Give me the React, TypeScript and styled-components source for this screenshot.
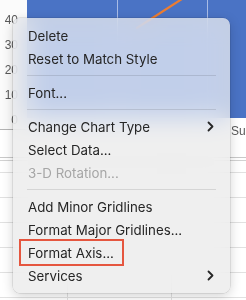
import React from 'react'
import styled, { createGlobalStyle } from 'styled-components'

const GlobalStyle = createGlobalStyle`
  html, body { margin: 0; padding: 0; background: #ffffff; }
  * { box-sizing: border-box; }
`

const Page = styled.div`
  position: relative;
  width: 246px;
  height: 300px;
  overflow: hidden;
  background: #ffffff;
  font-family: Inter, "Liberation Sans", sans-serif;
`

const Chart = styled.div`
  display: flex;
  height: 158px;
  border-bottom: 1px solid #c9c9c9;
`

const AxisColumn = styled.div`
  width: 27px;
  height: 130px;
  flex-shrink: 0;
  padding-top: 8px;
  padding-right: 9px;
  border-bottom: 1px solid #b4b4b4;
  background: #fbfbfb;
  display: flex;
  flex-direction: column;
  align-items: flex-end;
`

const AxisLabel = styled.div`
  height: 25px;
  line-height: 25px;
  font-size: 12px;
  color: #595959;
  font-family: "Liberation Sans", Arial, sans-serif;
`

const PlotColumn = styled.div`
  flex: 1;
  display: flex;
  flex-direction: column;
`

const Plot = styled.div`
  height: 118px;
  background: #4a73c5;
  svg { display: block; }
`

const CategoryRow = styled.div`
  height: 26px;
  padding-left: 204px;
  line-height: 26px;
  font-size: 12px;
  color: #595959;
  white-space: nowrap;
  font-family: "Liberation Sans", Arial, sans-serif;
`

const Sheet = styled.div`
  border-top: 1px solid #d2d2d2;
  margin-top: 2px;
`

const SheetRow = styled.div<{ $h: number }>`
  display: grid;
  grid-template-columns: 68px 104px 1fr;
  height: ${p => p.$h}px;
  border-bottom: 1px solid #e1e1e1;
`

const SheetCell = styled.div`
  border-right: 1px solid #e1e1e1;
  &:last-child { border-right: none; }
`

const Menu = styled.div`
  position: absolute;
  left: 13px;
  top: 18px;
  width: 217px;
  padding: 6px 0;
  border-radius: 7px;
  background: rgba(234, 234, 234, 0.77);
  backdrop-filter: blur(12px) saturate(1.4);
  box-shadow: 0 0 0 0.5px rgba(0, 0, 0, 0.16), 0 3px 12px rgba(0, 0, 0, 0.18);
`

const Item = styled.div<{ $disabled?: boolean }>`
  position: relative;
  display: flex;
  align-items: center;
  justify-content: space-between;
  height: 23px;
  padding: 0 16px 0 15px;
  font-size: 13.3px;
  color: ${p => (p.$disabled ? '#a6a6a6' : '#262626')};
  white-space: nowrap;
`

const Separator = styled.div`
  height: 11px;
  display: flex;
  align-items: center;
  padding: 0 14px;
  &::after {
    content: '';
    flex: 1;
    height: 1px;
    background: rgba(0, 0, 0, 0.11);
  }
`

const Highlight = styled.div`
  position: absolute;
  left: 6px;
  top: -2px;
  width: 105px;
  height: 27px;
  border: 2px solid #e5563f;
`

const Chevron = () => (
  <svg width="7" height="11" viewBox="0 0 7 11">
    <path d="M1.5 1.5 L5.5 5.5 L1.5 9.5" fill="none" stroke="#262626" strokeWidth="1.8" strokeLinecap="round" strokeLinejoin="round" />
  </svg>
)

const rows = [12, 25, 25, 25, 25, 25, 25]

export default function App() {
  return (
    <Page>
      <GlobalStyle />
      <Chart>
        <AxisColumn>
          {['40', '30', '20', '10', '0'].map(v => (
            <AxisLabel key={v}>{v}</AxisLabel>
          ))}
        </AxisColumn>
        <PlotColumn>
          <Plot>
            <svg width="219" height="118">
              <line x1="90.5" y1="0" x2="90.5" y2="118" stroke="#a9bce6" strokeWidth="1" />
              <line x1="180.5" y1="0" x2="180.5" y2="118" stroke="#a9bce6" strokeWidth="1" />
              <line x1="110" y1="28" x2="158" y2="-3" stroke="#ed7d31" strokeWidth="2.2" strokeLinecap="round" />
            </svg>
          </Plot>
          <CategoryRow>Su</CategoryRow>
        </PlotColumn>
      </Chart>
      <Sheet>
        {rows.map((h, i) => (
          <SheetRow key={i} $h={h}>
            <SheetCell />
            <SheetCell />
            <SheetCell />
          </SheetRow>
        ))}
      </Sheet>

      <Menu>
        <Item>Delete</Item>
        <Item>Reset to Match Style</Item>
        <Separator />
        <Item>Font...</Item>
        <Separator />
        <Item>Change Chart Type <Chevron /></Item>
        <Item>Select Data...</Item>
        <Item $disabled>3-D Rotation...</Item>
        <Separator />
        <Item>Add Minor Gridlines</Item>
        <Item>Format Major Gridlines...</Item>
        <Item>
          Format Axis...
          <Highlight />
        </Item>
        <Item>Services <Chevron /></Item>
      </Menu>
    </Page>
  )
}
